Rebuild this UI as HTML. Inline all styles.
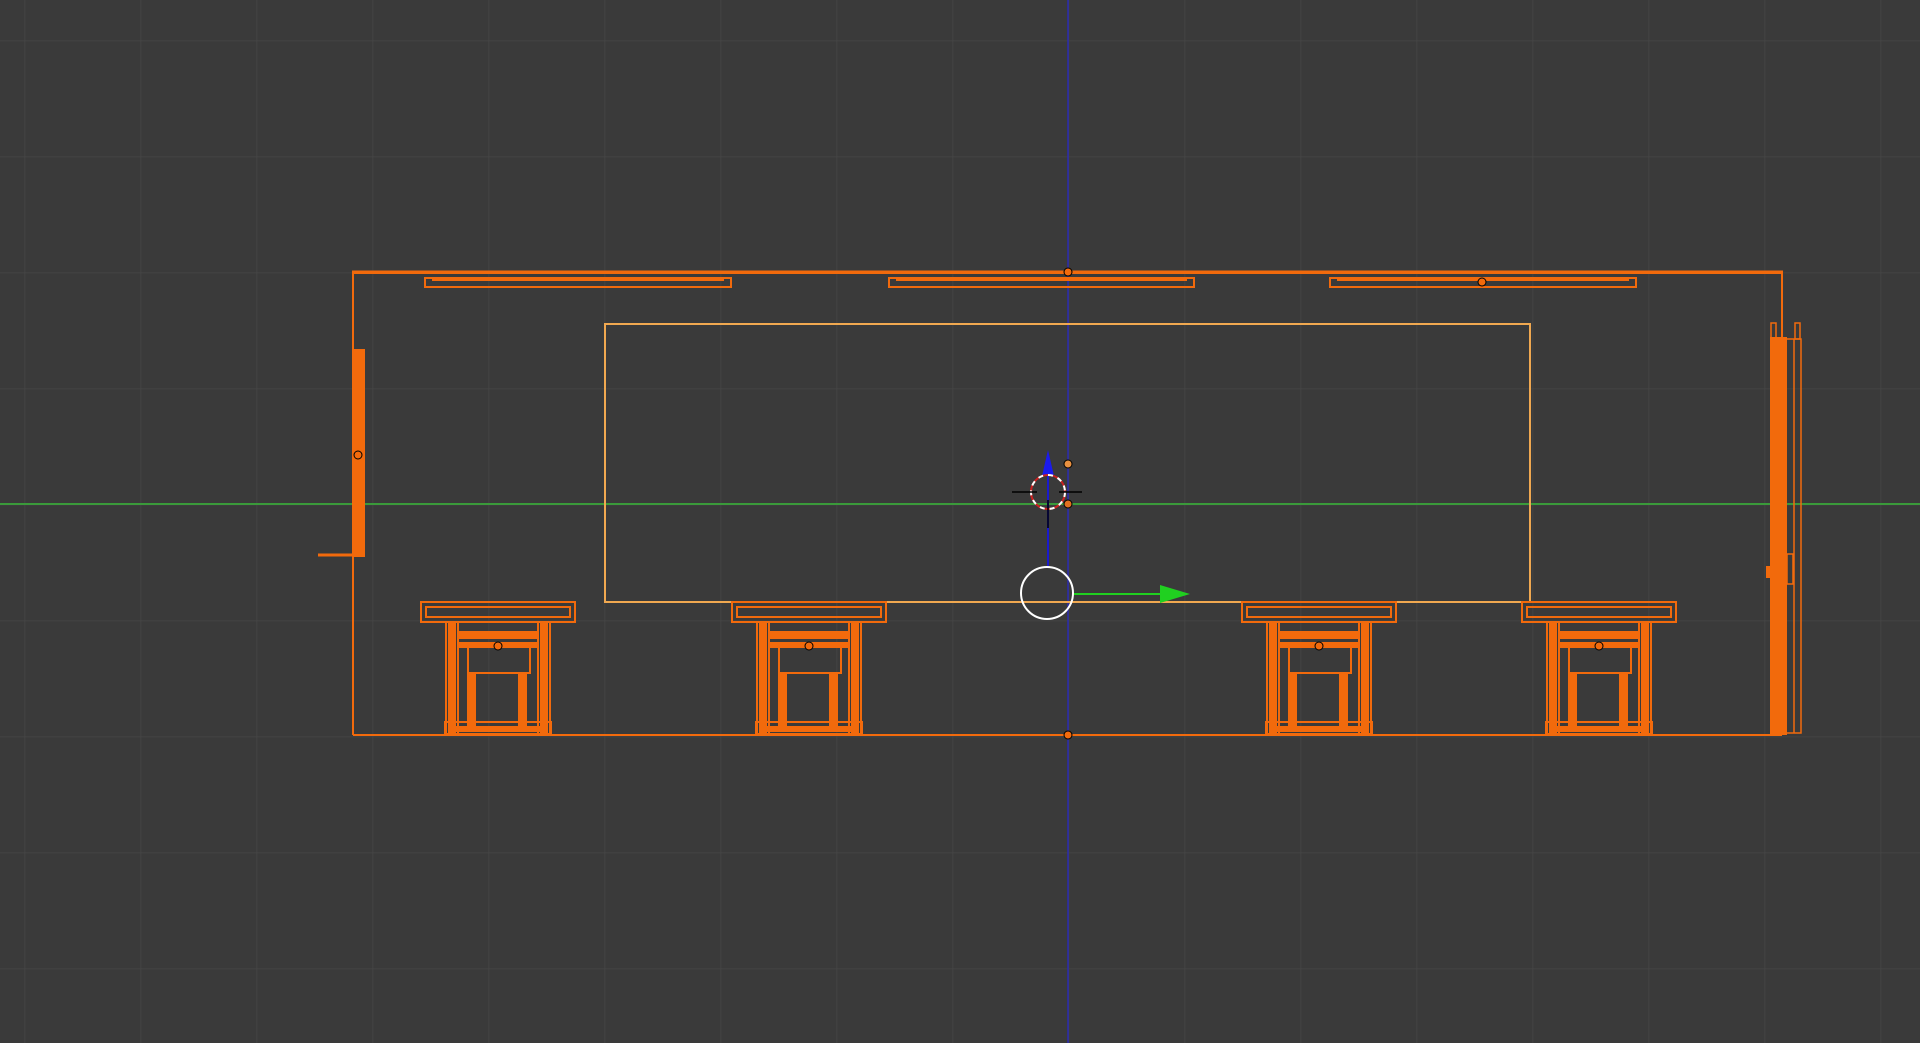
<!DOCTYPE html>
<html><head><meta charset="utf-8"><style>
html,body{margin:0;padding:0;background:#3a3a3a;overflow:hidden}
svg{display:block}
</style></head><body>
<svg width="1920" height="1043" viewBox="0 0 1920 1043" xmlns="http://www.w3.org/2000/svg">
<defs>
<pattern id="g" x="24.5" y="40.5" width="116" height="116" patternUnits="userSpaceOnUse">
<path d="M0 0H116M0 0V116" stroke="#464646" stroke-width="1.5" fill="none"/>
</pattern>
<g id="desk" fill="none" stroke="#f26a0c" stroke-width="2">
<rect x="-77" y="602" width="154" height="20"/>
<rect x="-72" y="607" width="144" height="10"/>
<rect x="-52" y="622" width="12" height="112"/>
<rect x="-49" y="622" width="6" height="112" fill="#f26a0c"/>
<rect x="40" y="622" width="12" height="112"/>
<rect x="43" y="622" width="6" height="112" fill="#f26a0c"/>
<rect x="-40" y="622" width="80" height="10"/>
<rect x="-40" y="632" width="80" height="6" fill="#f26a0c"/>
<rect x="-40" y="643" width="80" height="4" fill="#f26a0c"/>
<rect x="-30" y="647" width="62" height="26"/>
<rect x="-30" y="673" width="7" height="58" fill="#f26a0c"/>
<rect x="21" y="673" width="7" height="58" fill="#f26a0c"/>
<rect x="-53" y="722" width="106" height="12"/>
<rect x="-43" y="727" width="86" height="4" fill="#f26a0c"/>
<circle cx="0" cy="646" r="4" fill="#f26a0c" stroke="#000" stroke-width="1"/>
</g>
</defs>
<rect width="1920" height="1043" fill="#3a3a3a"/>
<rect width="1920" height="1043" fill="url(#g)"/>
<line x1="0" y1="504" x2="1920" y2="504" stroke="#3a9a3a" stroke-width="2"/>
<line x1="1068" y1="0" x2="1068" y2="1043" stroke="#2a2ab0" stroke-width="1.5"/>
<g fill="none" stroke="#f26a0c" stroke-width="2">
<polyline points="353,735 353,273 1782,273 1782,735"/>
<line x1="352" y1="272" x2="1783" y2="272" stroke-width="3"/>
<line x1="353" y1="735" x2="1782" y2="735" stroke-width="2"/>
<rect x="425" y="278" width="306" height="9"/>
<line x1="432" y1="280" x2="724" y2="280" stroke-width="2"/>
<rect x="889" y="278" width="305" height="9"/>
<line x1="896" y1="280" x2="1187" y2="280"/>
<rect x="1330" y="278" width="306" height="9"/>
<line x1="1337" y1="280" x2="1629" y2="280"/>
</g>
<circle cx="1068" cy="272" r="4" fill="#f26a0c" stroke="#000" stroke-width="1"/>
<circle cx="1482" cy="282" r="4" fill="#f26a0c" stroke="#000" stroke-width="1"/>
<circle cx="1068" cy="735" r="4" fill="#f26a0c" stroke="#000" stroke-width="1"/>
<rect x="605" y="324" width="925" height="278" fill="none" stroke="#f0a850" stroke-width="2"/>
<rect x="354" y="350" width="10" height="206" fill="#f26a0c" stroke="#f26a0c" stroke-width="2"/>
<polyline points="318,555 354,555" stroke="#f26a0c" stroke-width="3" fill="none"/>
<circle cx="358" cy="455" r="4" fill="#f26a0c" stroke="#000" stroke-width="1"/>
<rect x="1770" y="337" width="17" height="398" fill="#f26a0c"/>
<rect x="1771" y="323" width="5" height="16" fill="none" stroke="#f26a0c" stroke-width="1.5"/>
<rect x="1795" y="323" width="5" height="16" fill="none" stroke="#f26a0c" stroke-width="1.5"/>
<rect x="1785" y="339" width="16" height="394" fill="none" stroke="#f26a0c" stroke-width="1.5"/>
<line x1="1794" y1="339" x2="1794" y2="733" stroke="#f26a0c" stroke-width="1.5"/>
<rect x="1766" y="566" width="6" height="12" fill="#f26a0c"/>
<rect x="1787" y="554" width="6" height="30" fill="none" stroke="#f26a0c" stroke-width="1.5"/>
<use href="#desk" transform="translate(498,0)"/>
<use href="#desk" transform="translate(809,0)"/>
<use href="#desk" transform="translate(1319,0)"/>
<use href="#desk" transform="translate(1599,0)"/>
<line x1="1048" y1="476" x2="1048" y2="568" stroke="#1a1acc" stroke-width="2"/>
<polygon points="1048,450 1042,476 1054,476" fill="#1a1aee"/>
<line x1="1073" y1="594" x2="1162" y2="594" stroke="#20d020" stroke-width="2"/>
<polygon points="1160,585 1160,603 1190,594" fill="#20d020"/>
<circle cx="1047" cy="593" r="26" fill="none" stroke="#ffffff" stroke-width="2"/>
<circle cx="1048" cy="492" r="17" fill="none" stroke="#cc2020" stroke-width="2"/>
<circle cx="1048" cy="492" r="17" fill="none" stroke="#ffffff" stroke-width="2" stroke-dasharray="5 5"/>
<line x1="1012" y1="492" x2="1037" y2="492" stroke="#000" stroke-width="1.5"/>
<line x1="1059" y1="492" x2="1082" y2="492" stroke="#000" stroke-width="1.5"/>
<line x1="1048" y1="500" x2="1048" y2="528" stroke="#000" stroke-width="1.5"/>
<circle cx="1068" cy="464" r="4" fill="#e89040" stroke="#000" stroke-width="1"/>
<circle cx="1068" cy="504" r="4" fill="#e07020" stroke="#000" stroke-width="1"/>
</svg>
</body></html>
